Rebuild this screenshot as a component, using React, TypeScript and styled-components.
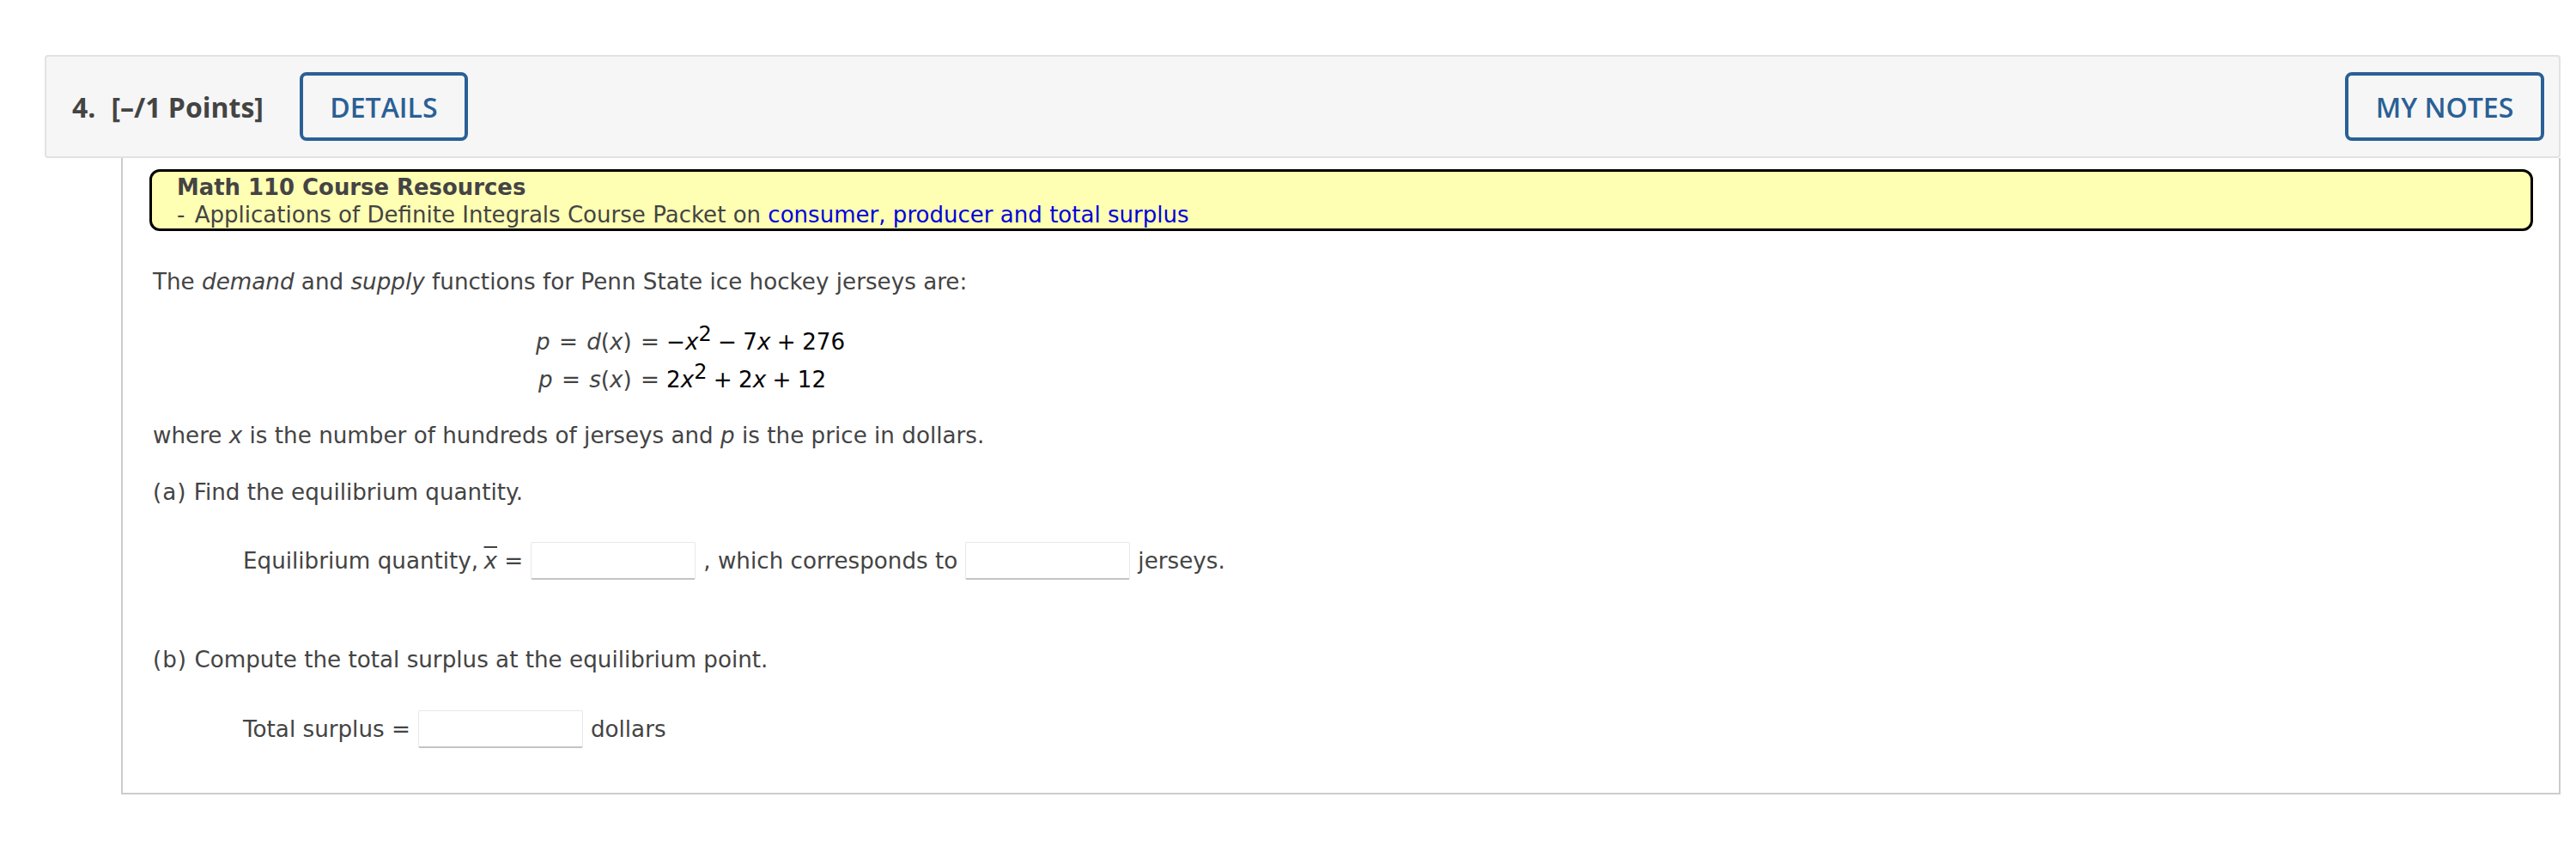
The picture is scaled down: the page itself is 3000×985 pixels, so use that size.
import React from 'react';
import styled, { createGlobalStyle } from 'styled-components';

const GlobalStyle = createGlobalStyle`
  * {
    box-sizing: border-box;
  }

  html, body {
    margin: 0;
    padding: 0;
    background: white;
  }
`;

const Page = styled.div`
  width: 3000px;
  height: 985px;
  padding: 64px 18px 0 52px;
  overflow: hidden;
`;

const QuestionHeader = styled.div`
  height: 120px;
  display: flex;
  align-items: center;
  padding: 0 17px 0 30px;
  background: #f6f6f6;
  border: 2px solid #e2e2e2;
  border-radius: 4px;
`;

const QuestionNumber = styled.span`
  font-family: "Open Sans", sans-serif;
  font-size: 32px;
  font-weight: 700;
  color: #444444;
  margin-right: 18px;
`;

const Points = styled.span`
  font-family: "Open Sans", sans-serif;
  font-size: 32px;
  font-weight: 700;
  color: #444444;
  margin-right: 42px;
`;

const HeaderButton = styled.button<{ $wide?: boolean }>`
  height: 80px;
  width: ${({ $wide }) => ($wide ? '232px' : '196px')};
  margin-left: ${({ $wide }) => ($wide ? 'auto' : '0')};
  padding: 0;
  background: transparent;
  border: 4px solid #2a6095;
  border-radius: 8px;
  color: #2a6095;
  font-family: "Open Sans", sans-serif;
  font-size: 32px;
  font-weight: 600;
`;

const QuestionBody = styled.div`
  margin-left: 89px;
  height: 741px;
  padding: 13px 30px 0 31px;
  border-left: 2px solid #cccccc;
  border-right: 2px solid #cccccc;
  border-bottom: 2px solid #cccccc;
  font-family: "DejaVu Sans", Verdana, sans-serif;
  font-size: 26.2px;
  color: #444444;
`;

const ResourceBox = styled.div`
  height: 72px;
  padding: 2px 29px 0;
  background: #ffffb3;
  border: 3px solid #000000;
  border-radius: 12px;
  line-height: 32px;
  font-size: 26.05px;
`;

const ResourceTitle = styled.div`
  font-size: 25.9px;
  font-weight: 700;
`;

const Dash = styled.span`
  margin-right: 3px;
`;

const ResourceLink = styled.a`
  color: #0000dd;
  text-decoration: none;
`;

const Paragraph = styled.p<{ $top: number }>`
  margin: ${({ $top }) => $top}px 0 0 4px;
  line-height: 40px;
`;

const PartLabel = styled.span`
  letter-spacing: 1px;
`;

const MathBlock = styled.div`
  margin: 28px 0 0 450px;
  display: grid;
  grid-template-columns: max-content max-content;
  column-gap: 8px;
  line-height: 44px;
`;

const MathLeft = styled.div`
  text-align: right;
  word-spacing: 2px;
`;

const MathRight = styled.div`
  color: #000000;
  word-spacing: -1px;
`;

const Sup = styled.sup`
  font-size: 24px;
  line-height: 0;
`;

const AnswerRow = styled.div<{ $top: number }>`
  margin: ${({ $top }) => $top}px 0 0 109px;
  height: 44px;
  display: flex;
  align-items: center;
  gap: 9px;
`;

const Answer = styled.input`
  width: 192px;
  height: 44px;
  padding: 0;
  background: white;
  border: 1px solid #e8e8e8;
  border-bottom: 2px solid #c4c4c4;
  border-radius: 2px;
`;

const Bar = styled.span`
  margin-left: -2px;
  text-decoration: overline;
  font-style: italic;
`;

const App = () => {
  return (
    <Page>
      <GlobalStyle />
      <QuestionHeader>
        <QuestionNumber>4.</QuestionNumber>
        <Points>[–/1 Points]</Points>
        <HeaderButton>DETAILS</HeaderButton>
        <HeaderButton $wide>MY NOTES</HeaderButton>
      </QuestionHeader>
      <QuestionBody>
        <ResourceBox>
          <ResourceTitle>Math 110 Course Resources</ResourceTitle>
          <div>
            <Dash>-</Dash> Applications of Definite Integrals Course Packet on{' '}
            <ResourceLink href="#">consumer, producer and total surplus</ResourceLink>
          </div>
        </ResourceBox>
        <Paragraph $top={39}>
          The <em>demand</em> and <em>supply</em> functions for Penn State ice hockey jerseys are:
        </Paragraph>
        <MathBlock>
          <MathLeft>
            <em>p</em> = <em>d</em>(<em>x</em>) =
          </MathLeft>
          <MathRight>
            −<em>x</em>
            <Sup>2</Sup> − 7<em>x</em> + 276
          </MathRight>
          <MathLeft>
            <em>p</em> = <em>s</em>(<em>x</em>) =
          </MathLeft>
          <MathRight>
            2<em>x</em>
            <Sup>2</Sup> + 2<em>x</em> + 12
          </MathRight>
        </MathBlock>
        <Paragraph $top={23}>
          where <em>x</em> is the number of hundreds of jerseys and <em>p</em> is the price in dollars.
        </Paragraph>
        <Paragraph $top={26}>
          <PartLabel>(a)</PartLabel> Find the equilibrium quantity.
        </Paragraph>
        <AnswerRow $top={38}>
          <span>
            Equilibrium quantity, <Bar>x</Bar> =
          </span>
          <Answer />
          <span>, which corresponds to</span>
          <Answer />
          <span>jerseys.</span>
        </AnswerRow>
        <Paragraph $top={73}>
          <PartLabel>(b)</PartLabel> Compute the total surplus at the equilibrium point.
        </Paragraph>
        <AnswerRow $top={39}>
          <span>Total surplus =</span>
          <Answer />
          <span>dollars</span>
        </AnswerRow>
      </QuestionBody>
    </Page>
  );
};

export default App;
